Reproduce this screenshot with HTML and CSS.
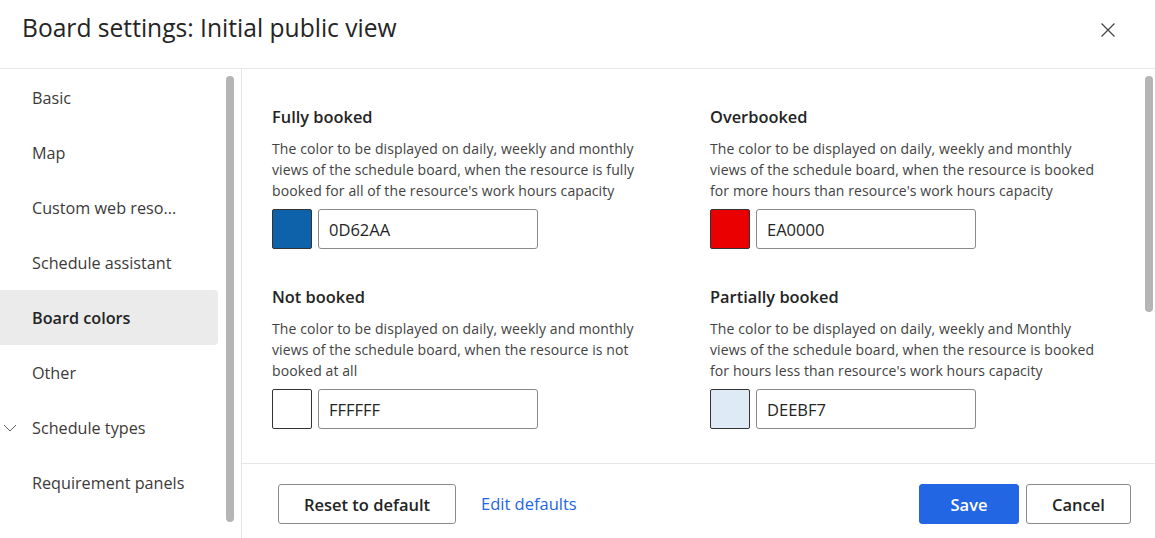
FILE: index.html
```html
<!DOCTYPE html>
<html>
<head>
<meta charset="utf-8">
<link rel="stylesheet" href="styles.css">
</head>
<body>
<div class="dialog">
  <header class="header">
    <h1 class="title">Board settings: Initial public view</h1>
    <button class="close" aria-label="Close">
      <svg width="16" height="16" viewBox="0 0 16 16"><path d="M1.5 1.5 L14.5 14.5 M14.5 1.5 L1.5 14.5" stroke="#424242" stroke-width="1.2" fill="none"/></svg>
    </button>
  </header>
  <div class="main">
    <nav class="nav">
      <div class="nav-item">Basic</div>
      <div class="nav-item">Map</div>
      <div class="nav-item">Custom web reso...</div>
      <div class="nav-item">Schedule assistant</div>
      <div class="nav-item active">Board colors</div>
      <div class="nav-item">Other</div>
      <div class="nav-item">
        <svg class="chev" width="14" height="10" viewBox="0 0 14 10"><path d="M1 2 L7 8 L13 2" stroke="#616161" stroke-width="1" fill="none"/></svg>
        Schedule types</div>
      <div class="nav-item">Requirement panels</div>
      <div class="scrollbar nav-scroll"></div>
    </nav>
    <section class="content">
      <div class="fields">
        <div class="field">
          <h2 class="field-title">Fully booked</h2>
          <p class="field-desc">The color to be displayed on daily, weekly and monthly views of the schedule board, when the resource is fully booked for all of the resource's work hours capacity</p>
          <div class="color-row">
            <div class="swatch" style="background:#0D62AA"></div>
            <div class="hex">0D62AA</div>
          </div>
        </div>
        <div class="field">
          <h2 class="field-title">Overbooked</h2>
          <p class="field-desc">The color to be displayed on daily, weekly and monthly views of the schedule board, when the resource is booked for more hours than resource's work hours capacity</p>
          <div class="color-row">
            <div class="swatch" style="background:#EA0000"></div>
            <div class="hex">EA0000</div>
          </div>
        </div>
        <div class="field">
          <h2 class="field-title">Not booked</h2>
          <p class="field-desc">The color to be displayed on daily, weekly and monthly views of the schedule board, when the resource is not booked at all</p>
          <div class="color-row">
            <div class="swatch" style="background:#FFFFFF"></div>
            <div class="hex">FFFFFF</div>
          </div>
        </div>
        <div class="field">
          <h2 class="field-title">Partially booked</h2>
          <p class="field-desc">The color to be displayed on daily, weekly and Monthly views of the schedule board, when the resource is booked for hours less than resource's work hours capacity</p>
          <div class="color-row">
            <div class="swatch" style="background:#DEEBF7"></div>
            <div class="hex">DEEBF7</div>
          </div>
        </div>
      </div>
      <div class="scrollbar content-scroll"></div>
      <footer class="footer">
        <button class="btn">Reset to default</button>
        <a class="link">Edit defaults</a>
        <span class="spacer"></span>
        <button class="btn primary">Save</button>
        <button class="btn cancel">Cancel</button>
      </footer>
    </section>
  </div>
</div>
</body>
</html>
```
FILE: styles.css
```css
* { box-sizing: border-box; }
html, body { margin: 0; padding: 0; }
body {
  width: 1155px;
  height: 538px;
  overflow: hidden;
  background: #fff;
  font-family: "Open Sans", "Noto Sans", sans-serif;
  color: #242424;
}
.dialog { display: flex; flex-direction: column; height: 538px; }
.header {
  height: 69px;
  flex: none;
  border-bottom: 1px solid #e6e6e6;
  display: flex;
  align-items: center;
  padding: 0 39px 13px 22px;
}
.title {
  margin: 0;
  font-size: 24.6px;
  font-weight: 400;
  color: #242424;
  flex: 1;
}
.close {
  border: 0; background: none; padding: 0; width: 16px; height: 16px; display: flex;
  margin-top: 4px;
}
.main { flex: 1; display: flex; min-height: 0; }
.nav {
  width: 242px;
  border-right: 1px solid #e6e6e6;
  padding-top: 1px;
  position: relative;
}
.nav-item {
  height: 55px;
  width: 218px;
  display: flex;
  align-items: center;
  padding-left: 32px;
  font-size: 16.2px;
  color: #3b3a39;
  position: relative;
}
.nav-item.active {
  background: #ebebeb;
  border-radius: 0 4px 4px 0;
  font-weight: 600;
  color: #242424;
}
.chev { position: absolute; left: 3px; top: 23px; }
.scrollbar {
  position: absolute;
  width: 8px;
  border-radius: 4px;
  background: #b5b5b5;
}
.nav-scroll { left: 226px; top: 7px; height: 446px; }
.content {
  flex: 1;
  display: flex;
  flex-direction: column;
  position: relative;
  min-height: 0;
}
.content-scroll { right: 2px; top: 7px; height: 236px; }
.fields {
  flex: 1;
  min-height: 0;
  overflow: hidden;
  display: grid;
  grid-template-columns: 438px 438px;
  grid-auto-rows: 180px;
  padding: 37px 0 0 30px;
}
.field-title {
  margin: 0;
  font-size: 16.4px;
  line-height: 22px;
  font-weight: 600;
  color: #242424;
}
.field-desc {
  margin: 10px 0 8px;
  height: 63px;
  font-size: 14px;
  line-height: 21px;
  color: #424242;
  width: 392px;
  letter-spacing: 0.1px;
}
.color-row { display: flex; gap: 6px; }
.swatch {
  width: 40px; height: 40px;
  border: 1px solid #333;
  border-radius: 2px;
}
.hex {
  width: 220px; height: 40px;
  border: 1px solid #8a8a8a;
  border-radius: 3px;
  display: flex; align-items: center;
  padding-left: 10px;
  font-size: 16.5px;
  color: #242424;
}
.footer {
  height: 75px;
  flex: none;
  border-top: 1px solid #e6e6e6;
  display: flex;
  align-items: flex-start;
  padding: 20px 24px 0 36px;
}
.btn {
  height: 40px;
  border: 1px solid #8a8a8a;
  border-radius: 3px;
  background: #fff;
  font-family: inherit;
  font-size: 16.5px;
  font-weight: 600;
  color: #242424;
  width: 178px;
  padding: 0;
}
.link {
  margin-left: 25px;
  line-height: 40px;
  font-size: 16.5px;
  color: #2266e3;
}
.spacer { flex: 1; }
.btn.primary {
  width: 100px;
  background: #2266e3;
  border-color: #2266e3;
  color: #fff;
}
.btn.cancel { width: 105px; margin-left: 7px; }
```
